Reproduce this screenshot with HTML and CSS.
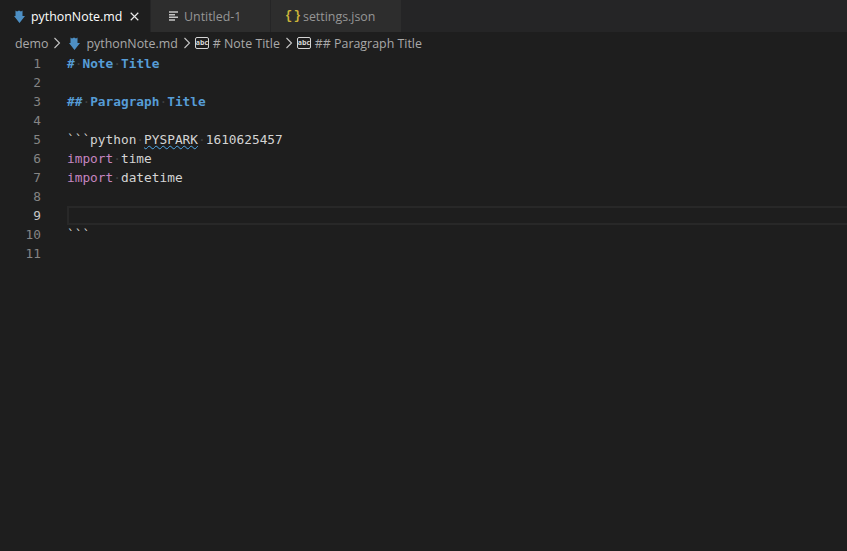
FILE: index.html

```html
<!DOCTYPE html>
<html>
<head>
  <meta charset="UTF-8">
  <title>pythonNote.md - demo</title>
  <link rel="stylesheet" href="styles.css">
</head>
<body>
  <div class="tabs">
    <div class="tab tab-active">
      <svg class="icon-md" viewBox="0 0 12 13"><path d="M2.500 0.500l1.500 1 2-1 2 1 1.500-1v5.500h2.500l-5.500 7-5.500-7h1.500z"/></svg>
      <span class="tab-name">pythonNote.md</span>
      <svg class="tab-close" viewBox="0 0 10 10"><path d="M0.800 0.800l8.400 8.400M9.200 0.800l-8.400 8.400"/></svg>
    </div>
    <div class="tab tab-untitled">
      <svg class="icon-lines" viewBox="0 0 10 10"><path d="M0 1h9M0 3.800h6M0 6.200h9M0 9h6"/></svg>
      <span class="tab-name">Untitled-1</span>
    </div>
    <div class="tab tab-settings">
      <span class="icon-json">{ }</span>
      <span class="tab-name">settings.json</span>
    </div>
  </div>

  <div class="crumbs">
    <span>demo</span>
    <svg class="chev" viewBox="0 0 8 12"><path d="M1.500 1l5 5-5 5"/></svg>
    <svg class="icon-md" viewBox="0 0 12 13"><path d="M2.500 0.500l1.500 1 2-1 2 1 1.500-1v5.500h2.500l-5.500 7-5.500-7h1.500z"/></svg>
    <span class="crumb-file">pythonNote.md</span>
    <svg class="chev" viewBox="0 0 8 12"><path d="M1.500 1l5 5-5 5"/></svg>
    <span class="icon-abc">abc</span>
    <span>#&nbsp;Note Title</span>
    <svg class="chev" viewBox="0 0 8 12"><path d="M1.500 1l5 5-5 5"/></svg>
    <span class="icon-abc">abc</span>
    <span>##&nbsp;Paragraph Title</span>
  </div>

  <div class="editor">
    <div class="row"><span class="num">1</span><code class="line head">#<i>·</i>Note<i>·</i>Title</code></div>
    <div class="row"><span class="num">2</span><code class="line"></code></div>
    <div class="row"><span class="num">3</span><code class="line head">##<i>·</i>Paragraph<i>·</i>Title</code></div>
    <div class="row"><span class="num">4</span><code class="line"></code></div>
    <div class="row"><span class="num">5</span><code class="line">```python<i>·</i><span class="squiggle">PYSPARK</span><i>·</i>1610625457</code></div>
    <div class="row"><span class="num">6</span><code class="line"><span class="kw">import</span><i>·</i>time</code></div>
    <div class="row"><span class="num">7</span><code class="line"><span class="kw">import</span><i>·</i>datetime</code></div>
    <div class="row"><span class="num">8</span><code class="line"></code></div>
    <div class="row row-current"><span class="num">9</span><code class="line"></code></div>
    <div class="row"><span class="num">10</span><code class="line">```</code></div>
    <div class="row"><span class="num">11</span><code class="line"></code></div>
  </div>
</body>
</html>
```

FILE: styles.css

```css
body {
  background: #1e1e1e;
  color: #d4d4d4;
  font-family: "Open Sans", "Noto Sans", sans-serif;
  margin: 0;
  height: 551px;
  overflow: hidden;
}
.tabs {
  display: flex;
  height: 32px;
  background: #252526;
}
.tab {
  display: flex;
  align-items: center;
  box-sizing: border-box;
  font-size: 12.400px;
  background: #2d2d2d;
  color: #969696;
  border-right: 1px solid #252526;
}
.tab-active {
  width: 151px;
  padding-left: 13px;
  background: #1e1e1e;
  color: #fff;
}
.tab-untitled {
  width: 120px;
  padding-left: 18px;
}
.tab-settings {
  width: 131px;
  padding-left: 14px;
}
.tab-name {
  margin-left: 6px;
}
.icon-md {
  width: 12px;
  height: 13px;
  fill: #4d8fc4;
}
.tab-close {
  width: 9px;
  height: 9px;
  margin-left: 8px;
  fill: none;
  stroke: #e8e8e8;
  stroke-width: 1.300;
}
.icon-lines {
  width: 10px;
  height: 10px;
  fill: none;
  stroke: #c5c5c5;
  stroke-width: 1.400;
}
.tab-untitled .tab-name {
  margin-left: 5px;
}
.icon-json {
  color: #cbb43a;
  font-family: "Liberation Mono", monospace;
  font-size: 12px;
  font-weight: bold;
  letter-spacing: -2.800px;
  white-space: pre;
  width: 12px;
}
.tab-settings .tab-name {
  margin-left: 6px;
}
.crumbs {
  display: flex;
  align-items: center;
  height: 22px;
  padding-left: 15px;
  font-size: 12.400px;
  color: #a9a9a9;
}
.crumb-file {
  margin-left: 6px;
}
.chev {
  width: 8px;
  height: 12px;
  margin: 0 4px 0 5px;
  fill: none;
  stroke: #c5c5c5;
  stroke-width: 1.100;
}
.crumbs .icon-md {
  margin-left: 3px;
}
.icon-abc {
  box-sizing: border-box;
  width: 14px;
  height: 12px;
  margin-right: 4px;
  border: 1px solid #d4d4d4;
  border-radius: 2px;
  font-size: 7px;
  font-weight: bold;
  line-height: 9px;
  text-align: center;
  color: #d4d4d4;
}
.row {
  display: flex;
  height: 19px;
}
.num {
  width: 41px;
  text-align: right;
  font-family: "DejaVu Sans Mono", monospace;
  font-size: 12.800px;
  line-height: 19px;
  color: #858585;
}
.line {
  flex: 1;
  margin-left: 26px;
  font-family: "DejaVu Sans Mono", monospace;
  font-size: 12.800px;
  line-height: 19px;
  white-space: pre;
}
.line i {
  font-style: normal;
  font-weight: normal;
  color: #404040;
}
.head {
  color: #569cd6;
  font-weight: bold;
}
.kw {
  color: #c586c0;
}
.squiggle {
  text-decoration: underline wavy #4fa8e8;
  text-decoration-thickness: 1px;
}
.row-current .num {
  color: #c6c6c6;
}
.row-current .line {
  box-sizing: border-box;
  border: 2px solid #282828;
  border-right: 0;
}
```
